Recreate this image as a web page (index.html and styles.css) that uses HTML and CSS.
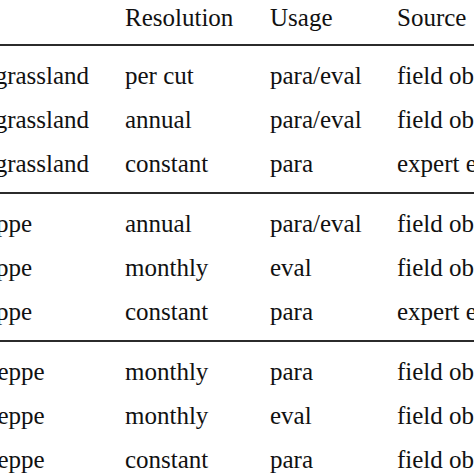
FILE: index.html
```html
<!DOCTYPE html>
<html>
<head>
<meta charset="utf-8">
<link rel="stylesheet" href="styles.css">
</head>
<body>
<div class="clip">
  <div class="table">
    <div class="head row">
      <div class="cell">Site</div>
      <div class="cell">Resolution</div>
      <div class="cell">Usage</div>
      <div class="cell">Source</div>
    </div>
    <div class="group">
      <div class="row"><div class="cell">mountain grassland</div><div class="cell">per cut</div><div class="cell">para/eval</div><div class="cell">field observation</div></div>
      <div class="row"><div class="cell">mountain grassland</div><div class="cell">annual</div><div class="cell">para/eval</div><div class="cell">field observation</div></div>
      <div class="row"><div class="cell">mountain grassland</div><div class="cell">constant</div><div class="cell">para</div><div class="cell">expert estimation</div></div>
    </div>
    <div class="group">
      <div class="row"><div class="cell">typical steppe</div><div class="cell">annual</div><div class="cell">para/eval</div><div class="cell">field observation</div></div>
      <div class="row"><div class="cell">typical steppe</div><div class="cell">monthly</div><div class="cell">eval</div><div class="cell">field observation</div></div>
      <div class="row"><div class="cell">typical steppe</div><div class="cell">constant</div><div class="cell">para</div><div class="cell">expert estimation</div></div>
    </div>
    <div class="group last">
      <div class="row"><div class="cell">shrubby steppe</div><div class="cell">monthly</div><div class="cell">para</div><div class="cell">field observation</div></div>
      <div class="row"><div class="cell">shrubby steppe</div><div class="cell">monthly</div><div class="cell">eval</div><div class="cell">field observation</div></div>
      <div class="row"><div class="cell">shrubby steppe</div><div class="cell">constant</div><div class="cell">para</div><div class="cell">field observation</div></div>
    </div>
  </div>
</div>
</body>
</html>
```
FILE: styles.css
```css
html, body {
  margin: 0;
  padding: 0;
  background: #ffffff;
}
.clip {
  width: 474px;
  height: 474px;
  overflow: hidden;
}
.table {
  margin-left: -106px;
  font-family: "Liberation Serif", "Times New Roman", serif;
  font-size: 25px;
  color: #111111;
}
.row {
  display: grid;
  grid-template-columns: 231px 145px 127px 300px;
  height: 44px;
  line-height: 44px;
  white-space: nowrap;
}
.head {
  height: 30px;
  line-height: 30px;
  padding-top: 3px;
  padding-bottom: 11px;
  border-bottom: 2px solid #2b2b2b;
}
.group {
  padding-top: 8px;
  padding-bottom: 6px;
  border-bottom: 2px solid #2b2b2b;
}
.group.last {
  border-bottom: none;
}
```
